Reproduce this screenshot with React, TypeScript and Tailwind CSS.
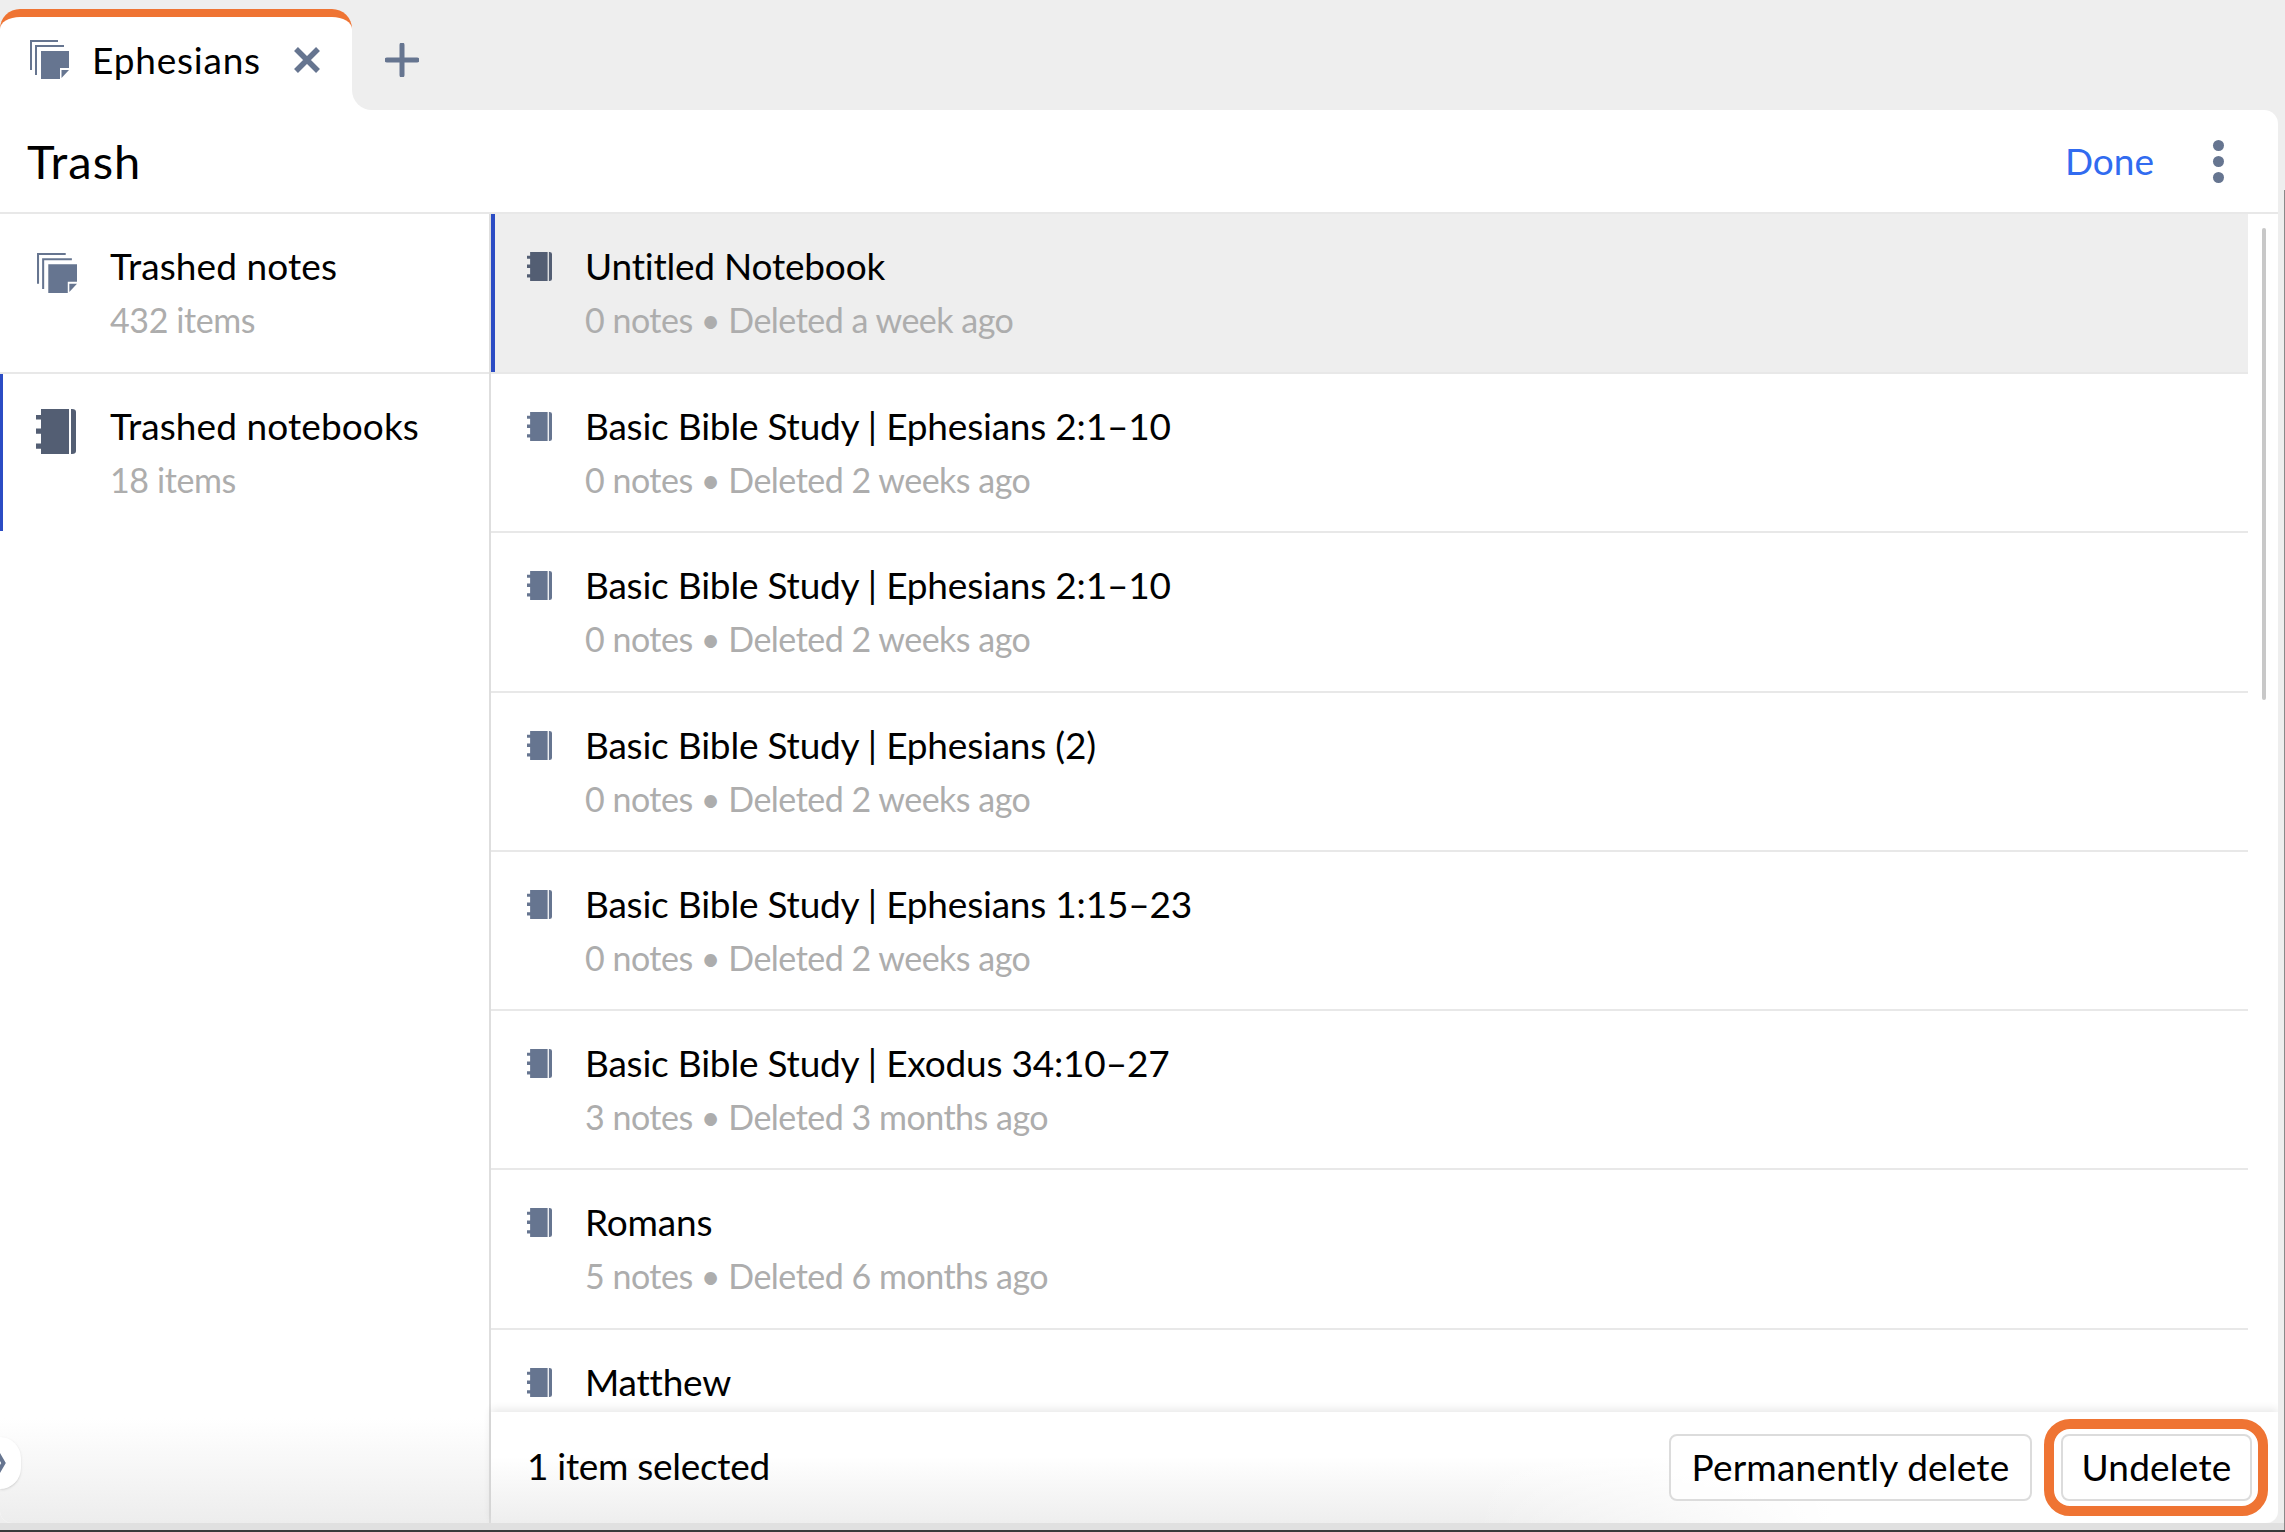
import React from "react";

const StackIcon = ({ className = "" }: { className?: string }) => (
  <svg viewBox="0 0 39 39" className={className}>
    <path d="M0 30V0h28v2H2v28z" fill="#667590" />
    <path d="M5 35V5h29v2H7v28z" fill="#667590" />
    <path d="M11 39V11h28v17h-9v11z" fill="#667590" />
    <path d="M31.500 30H39l-7.500 8z" fill="#667590" />
  </svg>
);

const NotebookIcon = ({ className = "", color = "#667590" }: { className?: string; color?: string }) => (
  <svg viewBox="0 0 40 60" className={className} preserveAspectRatio="none">
    <path d="M5 0h28v60H5V53H0v-7h5V33H0v-7h5V14H0V8h5z" fill={color} />
    <path d="M35 0h1a4 4 0 0 1 4 4v52a4 4 0 0 1-4 4h-1z" fill={color} />
  </svg>
);

const rows = [
  ["Untitled Notebook", "0 notes • Deleted a week ago"],
  ["Basic Bible Study | Ephesians 2:1–10", "0 notes • Deleted 2 weeks ago"],
  ["Basic Bible Study | Ephesians 2:1–10", "0 notes • Deleted 2 weeks ago"],
  ["Basic Bible Study | Ephesians (2)", "0 notes • Deleted 2 weeks ago"],
  ["Basic Bible Study | Ephesians 1:15–23", "0 notes • Deleted 2 weeks ago"],
  ["Basic Bible Study | Exodus 34:10–27", "3 notes • Deleted 3 months ago"],
  ["Romans", "5 notes • Deleted 6 months ago"],
  ["Matthew", ""],
];

export default function App() {
  return (
    <div className="relative w-[2285px] h-[1532px] overflow-hidden bg-[#eeeeee] flex flex-col font-['Lato','Liberation_Sans',sans-serif] text-black">
      {/* Tab strip */}
      <div className="h-[110px] shrink-0 flex bg-white">
        <div className="w-[352px] bg-[#eeeeee] pt-[9px]">
          <div className="h-[101px] rounded-t-[20px] bg-white border-t-[8px] border-[#ef7433] flex items-center pb-[8px] pl-[30px] pr-[32px]">
            <StackIcon className="w-[39px] h-[39px]" />
            <span className="ml-[23px] text-[37px] leading-[44px] tracking-[0.8px]">Ephesians</span>
            <svg viewBox="0 0 26 26" className="ml-auto w-[26px] h-[26px]">
              <path d="M2 2l22 22M24 2L2 24" stroke="#667590" strokeWidth="5.5" />
            </svg>
          </div>
        </div>
        <div className="flex-1 bg-[#eeeeee] rounded-bl-[20px] flex items-start pl-[33px] pt-[43px]">
          <svg viewBox="0 0 34 34" className="w-[34px] h-[34px]">
            <path d="M17 2v30M2 17h30" stroke="#667590" strokeWidth="5" strokeLinecap="round" />
          </svg>
        </div>
      </div>

      {/* Window */}
      <div className="h-[1413px] shrink-0 w-[2278px] bg-white rounded-tr-[14px] rounded-b-[12px] overflow-hidden flex flex-col">
        <div className="h-[104px] shrink-0 border-b-2 border-[#e8e8e8] flex items-center justify-between pl-[27px] pr-[54px]">
          <span className="text-[47px] leading-none tracking-[1px]">Trash</span>
          <div className="flex items-center gap-[59px]">
            <span className="text-[37px] leading-none text-[#316bf0] pb-[2px]">Done</span>
            <div className="flex flex-col gap-[5px]">
              <span className="block w-[11px] h-[11px] rounded-full bg-[#667590]" />
              <span className="block w-[11px] h-[11px] rounded-full bg-[#667590]" />
              <span className="block w-[11px] h-[11px] rounded-full bg-[#667590]" />
            </div>
          </div>
        </div>

        <div className="flex-1 flex min-h-0">
          {/* Sidebar */}
          <div className="w-[491px] shrink-0 border-r-2 border-[#dedede] flex flex-col bg-gradient-to-b from-white from-[92%] to-[#ededed]">
            <div className="h-[160px] border-b-2 border-[#e8e8e8] flex pl-[37px] pt-[39px]">
              <StackIcon className="w-[40px] h-[40px]" />
              <div className="ml-[33px] -mt-[12px]">
                <div className="text-[37px] leading-[50px] tracking-[0.1px]">Trashed notes</div>
                <div className="text-[34px] leading-[58px] text-[#adadad] tracking-[-0.4px]">432 items</div>
              </div>
            </div>
            <div className="h-[157px] border-l-[3px] border-[#2b4cc4] flex pl-[33px] pt-[35px]">
              <NotebookIcon className="w-[40px] h-[45px]" color="#535e73" />
              <div className="ml-[34px] -mt-[8px]">
                <div className="text-[37px] leading-[50px] tracking-[0.1px]">Trashed notebooks</div>
                <div className="text-[34px] leading-[58px] text-[#adadad] tracking-[-0.4px]">18 items</div>
              </div>
            </div>
          </div>

          {/* List */}
          <div className="flex-1 min-w-0 flex flex-col">
            <div className="flex-1 min-h-0 overflow-hidden flex">
              <div className="w-[1757px] shrink-0">
                {rows.map(([title, sub], i) => (
                  <div
                    key={i}
                    className={
                      i === 0
                        ? "h-[158px] flex pt-[38px] pl-[32px] bg-[#eeeeee] border-l-[5px] border-[#2b4cc4] -ml-[1px]"
                        : "h-[159.3px] flex pt-[38px] pl-[36px] border-t-2 border-[#e8e8e8]"
                    }
                  >
                    <NotebookIcon className="w-[25px] h-[29px]" color={i === 0 ? "#535e73" : "#667590"} />
                    <div className="ml-[33px] -mt-[11px]">
                      <div className="text-[37px] leading-[50px] tracking-[-0.2px] whitespace-nowrap">{title}</div>
                      <div className="text-[34px] leading-[58px] text-[#adadad] tracking-[-0.5px] whitespace-nowrap">{sub}</div>
                    </div>
                  </div>
                ))}
              </div>
              <div className="w-[30px] shrink-0 pl-[14px] pt-[14px]">
                <div className="w-[4px] h-[472px] rounded-full bg-[#c8c8c8]" />
              </div>
            </div>
            <div className="h-[111px] shrink-0 shadow-[0_-3px_8px_rgba(0,0,0,0.09)] bg-gradient-to-b from-white from-[40%] to-[#eeeeee] relative">
              <div className="h-full flex items-center pl-[36px] pr-[26px] bg-gradient-to-r from-transparent from-[55%] to-white to-[75%]">
                <span className="text-[37px] leading-none tracking-[-0.3px] pb-[4px]">1 item selected</span>
                <div className="ml-auto flex items-center gap-[29px]">
                  <button className="w-[363px] h-[67px] rounded-[8px] border-2 border-[#dcdcdc] bg-white/70 text-[37px] leading-[58px] tracking-[0.2px] pb-[2px]">Permanently delete</button>
                  <button className="relative w-[191px] h-[67px] rounded-[8px] border-2 border-[#dcdcdc] bg-white text-[37px] leading-[58px] tracking-[0.2px] pb-[2px]">
                    Undelete
                    <span className="absolute -top-[17px] -bottom-[17px] -left-[19px] -right-[18px] rounded-[26px] border-[10px] border-[#ef7433]" />
                  </button>
                </div>
              </div>
            </div>
          </div>
        </div>
      </div>

      {/* Strip under the window and edge of the desktop behind */}
      <div className="h-[7px] shrink-0 bg-[#e0e0e0]" />
      <div className="h-[2px] shrink-0 bg-[#3a3a3a]" />

      {/* Sidebar collapse handle */}
      <div className="absolute left-0 top-[1437px] w-[21px] h-[52px] rounded-r-full bg-white shadow-sm flex items-center overflow-hidden">
        <svg viewBox="0 0 6 28" className="w-[6px] h-[28px]">
          <path d="M-4 1L3.500 14L-4 27" fill="none" stroke="#667590" strokeWidth="4" />
        </svg>
      </div>
      <div className="absolute right-0 top-[190px] w-[1px] h-[1340px] bg-[#8a8a8a]" />
    </div>
  );
}
